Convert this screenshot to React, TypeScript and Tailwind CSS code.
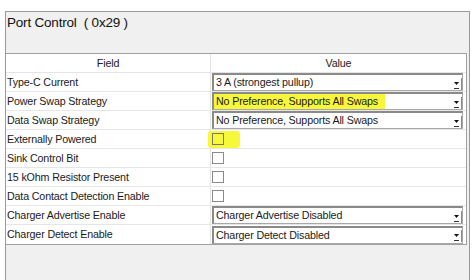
import React from "react";

const Arrow = () => (
  <svg width="10" height="14" viewBox="0 0 10 14" className="shrink-0">
    <path d="M2 6 L7 6 L4.5 9 Z" fill="#111" />
    <line x1="2" y1="12.5" x2="7" y2="12.5" stroke="#333" strokeWidth="1" />
    <line x1="9.5" y1="2" x2="9.5" y2="14" stroke="#8a8a8a" strokeWidth="1" />
  </svg>
);

const Select = ({ text, hl }: { text: string; hl?: boolean }) => (
  <div className="ml-[1px] mr-[3px] flex h-[18px] items-center justify-between border-t-2 border-l-2 border-b border-r border-t-[#8a8a8a] border-l-[#8a8a8a] border-b-[#a8a8a8] border-r-[#a8a8a8] bg-white">
    <span
      className={
        "flex h-full items-center whitespace-nowrap pl-[2px] pr-[7px] text-[10.7px] tracking-[-0.15px] leading-none text-[#1a1a1a] " +
        (hl ? "bg-[#f8f83a]" : "")
      }
    >
      {text}
    </span>
    <Arrow />
  </div>
);

const Check = ({ hl }: { hl?: boolean }) =>
  hl ? (
    <div className="-ml-[3px] flex h-[17px] w-[32px] items-center rounded-[3px] bg-[#f8f83a] pl-[4px]">
      <div className="h-[12px] w-[12px] border border-[#777]" />
    </div>
  ) : (
    <div className="ml-[1px] h-[12px] w-[12px] border border-[#8a8a8a] bg-white" />
  );

type Row = { label: string; kind: "select" | "check"; text?: string; hl?: boolean };

const rows: Row[] = [
  { label: "Type-C Current", kind: "select", text: "3 A (strongest pullup)" },
  { label: "Power Swap Strategy", kind: "select", text: "No Preference, Supports All Swaps", hl: true },
  { label: "Data Swap Strategy", kind: "select", text: "No Preference, Supports All Swaps" },
  { label: "Externally Powered", kind: "check", hl: true },
  { label: "Sink Control Bit", kind: "check" },
  { label: "15 kOhm Resistor Present", kind: "check" },
  { label: "Data Contact Detection Enable", kind: "check" },
  { label: "Charger Advertise Enable", kind: "select", text: "Charger Advertise Disabled" },
  { label: "Charger Detect Enable", kind: "select", text: "Charger Detect Disabled" },
];

export default function App() {
  return (
    <div
      className="h-[280px] w-[474px] overflow-hidden bg-white pt-[11px] pl-[5px] pr-[4px]"
      style={{ fontFamily: '"Liberation Sans", Arial, sans-serif' }}
    >
      <div className="flex h-[269px] flex-col border-l border-t border-r border-[#9a9a9a] bg-[#f0f0f0]">
        <div className="h-[41px] pl-[1px] pt-[3px] text-[13.5px] tracking-[-0.2px] leading-[16px] text-[#111]">
          Port Control&nbsp; ( 0x29 )
        </div>
        <div className="mr-[2px] border-t border-b border-r border-[#a0a0a0] bg-white">
          <div className="grid h-[19px] grid-cols-[205px_1fr] border-b border-[#e4e4e4] text-[10.7px] tracking-[-0.15px] text-[#222]">
            <div className="flex items-center justify-center border-r border-[#e4e4e4]">Field</div>
            <div className="flex items-center justify-center">Value</div>
          </div>
          {rows.map((r, i) => (
            <div
              key={i}
              className={
                "grid h-[19px] grid-cols-[205px_1fr] text-[10.7px] tracking-[-0.15px] text-[#1a1a1a] " +
                (i < rows.length - 1 ? "border-b border-[#e6e6e6]" : "")
              }
            >
              <div className="flex items-center border-r border-[#e4e4e4] pl-[1px] leading-none whitespace-nowrap">{r.label}</div>
              <div className="flex flex-col justify-center">
                {r.kind === "select" ? <Select text={r.text!} hl={r.hl} /> : <Check hl={r.hl} />}
              </div>
            </div>
          ))}
        </div>
      </div>
    </div>
  );
}
